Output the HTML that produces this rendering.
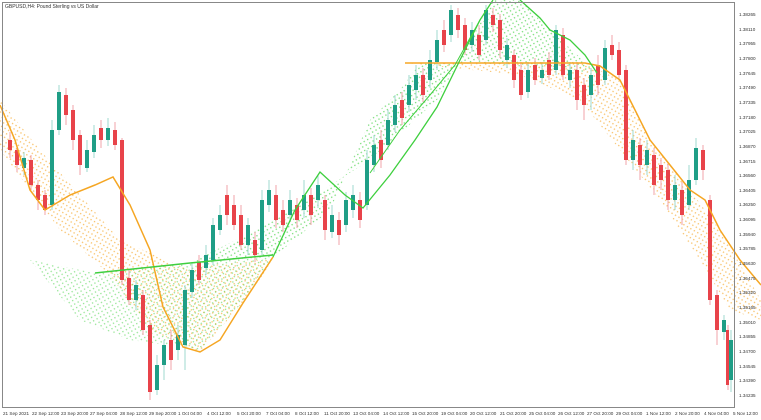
<!DOCTYPE html>
<html><head><meta charset="utf-8"><style>
html,body{margin:0;padding:0;background:#fff;width:761px;height:420px;overflow:hidden}
svg{display:block}
text{font-family:"Liberation Sans",sans-serif;fill:#333}
.g line{stroke:#9fd8cf;stroke-width:1}
.r line{stroke:#f2a3a8;stroke-width:1}
.g rect{fill:#1f9e86}
.r rect{fill:#e8434a}
</style></head><body>
<svg width="761" height="420" viewBox="0 0 761 420" xmlns="http://www.w3.org/2000/svg">
<defs>
<pattern id="po" width="4" height="4" patternUnits="userSpaceOnUse" patternTransform="rotate(30)"><rect x="0" y="0" width="1.3" height="1.3" fill="#f5a623" opacity="0.7"/></pattern>
<pattern id="pg" width="4" height="4" patternUnits="userSpaceOnUse" patternTransform="rotate(-30)"><rect x="0" y="0" width="1.3" height="1.3" fill="#3ecf3e" opacity="0.7"/></pattern>
</defs>
<rect x="0" y="0" width="761" height="420" fill="#fff"/>
<polygon points="0,100 40,150 120,240 185,268 275,258 245,300 200,352 150,330 110,275 60,230 0,150" fill="url(#po)"/>
<polygon points="30,260 95,273 190,263 275,256 240,305 200,350 183,347 130,340 80,320" fill="url(#pg)" opacity="0.8"/>
<polygon points="190,263 275,220 370,160 437,100 493,0 520,0 550,30 597,73 480,63 420,63 400,90 370,120 330,210 275,256" fill="url(#pg)"/>
<polygon points="405,63 480,63 585,63 620,80 650,140 690,190 720,230 761,300 761,320 730,310 700,260 660,200 620,150 580,100 520,75" fill="url(#po)"/>

<g class="g">
<line x1="24" x2="24" y1="152" y2="175"/><rect x="22" y="158" width="4" height="10"/>
<line x1="52" x2="52" y1="120" y2="210"/><rect x="50" y="130" width="4" height="75"/>
<line x1="59" x2="59" y1="85" y2="135"/><rect x="57" y="92" width="4" height="38"/>
<line x1="87" x2="87" y1="140" y2="172"/><rect x="85" y="150" width="4" height="18"/>
<line x1="94" x2="94" y1="125" y2="158"/><rect x="92" y="135" width="4" height="17"/>
<line x1="108" x2="108" y1="118" y2="146"/><rect x="106" y="128" width="4" height="12"/>
<line x1="136" x2="136" y1="280" y2="310"/><rect x="134" y="285" width="4" height="15"/>
<line x1="157" x2="157" y1="355" y2="395"/><rect x="155" y="365" width="4" height="25"/>
<line x1="164" x2="164" y1="340" y2="380"/><rect x="162" y="345" width="4" height="20"/>
<line x1="178" x2="178" y1="325" y2="360"/><rect x="176" y="335" width="4" height="15"/>
<line x1="185" x2="185" y1="285" y2="370"/><rect x="183" y="290" width="4" height="55"/>
<line x1="192" x2="192" y1="262" y2="298"/><rect x="190" y="270" width="4" height="22"/>
<line x1="206" x2="206" y1="245" y2="275"/><rect x="204" y="255" width="4" height="13"/>
<line x1="213" x2="213" y1="218" y2="265"/><rect x="211" y="225" width="4" height="35"/>
<line x1="220" x2="220" y1="205" y2="235"/><rect x="218" y="215" width="4" height="15"/>
<line x1="248" x2="248" y1="218" y2="255"/><rect x="246" y="225" width="4" height="20"/>
<line x1="262" x2="262" y1="190" y2="255"/><rect x="260" y="200" width="4" height="50"/>
<line x1="269" x2="269" y1="180" y2="212"/><rect x="267" y="190" width="4" height="15"/>
<line x1="290" x2="290" y1="190" y2="222"/><rect x="288" y="200" width="4" height="15"/>
<line x1="304" x2="304" y1="180" y2="218"/><rect x="302" y="195" width="4" height="15"/>
<line x1="318" x2="318" y1="175" y2="208"/><rect x="316" y="185" width="4" height="15"/>
<line x1="332" x2="332" y1="205" y2="238"/><rect x="330" y="215" width="4" height="17"/>
<line x1="346" x2="346" y1="192" y2="232"/><rect x="344" y="200" width="4" height="25"/>
<line x1="353" x2="353" y1="185" y2="218"/><rect x="351" y="195" width="4" height="15"/>
<line x1="367" x2="367" y1="150" y2="210"/><rect x="365" y="160" width="4" height="45"/>
<line x1="374" x2="374" y1="135" y2="172"/><rect x="372" y="145" width="4" height="20"/>
<line x1="388" x2="388" y1="110" y2="150"/><rect x="386" y="120" width="4" height="25"/>
<line x1="395" x2="395" y1="95" y2="132"/><rect x="393" y="105" width="4" height="20"/>
<line x1="409" x2="409" y1="75" y2="112"/><rect x="407" y="85" width="4" height="20"/>
<line x1="416" x2="416" y1="65" y2="100"/><rect x="414" y="75" width="4" height="15"/>
<line x1="430" x2="430" y1="50" y2="88"/><rect x="428" y="60" width="4" height="20"/>
<line x1="437" x2="437" y1="30" y2="70"/><rect x="435" y="40" width="4" height="22"/>
<line x1="451" x2="451" y1="5" y2="42"/><rect x="449" y="10" width="4" height="25"/>
<line x1="472" x2="472" y1="22" y2="52"/><rect x="470" y="30" width="4" height="15"/>
<line x1="486" x2="486" y1="5" y2="45"/><rect x="484" y="10" width="4" height="30"/>
<line x1="507" x2="507" y1="38" y2="68"/><rect x="505" y="45" width="4" height="15"/>
<line x1="528" x2="528" y1="62" y2="98"/><rect x="526" y="70" width="4" height="22"/>
<line x1="542" x2="542" y1="62" y2="84"/><rect x="540" y="70" width="4" height="8"/>
<line x1="556" x2="556" y1="25" y2="75"/><rect x="554" y="30" width="4" height="40"/>
<line x1="570" x2="570" y1="62" y2="88"/><rect x="568" y="70" width="4" height="10"/>
<line x1="591" x2="591" y1="68" y2="110"/><rect x="589" y="75" width="4" height="20"/>
<line x1="605" x2="605" y1="40" y2="85"/><rect x="603" y="48" width="4" height="32"/>
<line x1="633" x2="633" y1="130" y2="170"/><rect x="631" y="140" width="4" height="20"/>
<line x1="647" x2="647" y1="140" y2="175"/><rect x="645" y="150" width="4" height="15"/>
<line x1="675" x2="675" y1="175" y2="210"/><rect x="673" y="185" width="4" height="15"/>
<line x1="689" x2="689" y1="165" y2="210"/><rect x="687" y="180" width="4" height="25"/>
<line x1="696" x2="696" y1="138" y2="185"/><rect x="694" y="148" width="4" height="32"/>
<line x1="724" x2="724" y1="315" y2="340"/><rect x="722" y="320" width="4" height="12"/>
<line x1="731" x2="731" y1="330" y2="392"/><rect x="729" y="340" width="4" height="40"/>
</g>
<g class="r">
<line x1="10" x2="10" y1="132" y2="158"/><rect x="8" y="140" width="4" height="10"/>
<line x1="17" x2="17" y1="145" y2="172"/><rect x="15" y="150" width="4" height="15"/>
<line x1="31" x2="31" y1="155" y2="190"/><rect x="29" y="160" width="4" height="25"/>
<line x1="38" x2="38" y1="180" y2="210"/><rect x="36" y="185" width="4" height="15"/>
<line x1="45" x2="45" y1="190" y2="215"/><rect x="43" y="195" width="4" height="15"/>
<line x1="66" x2="66" y1="88" y2="125"/><rect x="64" y="95" width="4" height="20"/>
<line x1="73" x2="73" y1="105" y2="150"/><rect x="71" y="110" width="4" height="30"/>
<line x1="80" x2="80" y1="130" y2="175"/><rect x="78" y="135" width="4" height="30"/>
<line x1="101" x2="101" y1="120" y2="148"/><rect x="99" y="128" width="4" height="12"/>
<line x1="115" x2="115" y1="122" y2="150"/><rect x="113" y="130" width="4" height="15"/>
<line x1="122" x2="122" y1="138" y2="285"/><rect x="120" y="140" width="4" height="140"/>
<line x1="129" x2="129" y1="270" y2="305"/><rect x="127" y="278" width="4" height="22"/>
<line x1="143" x2="143" y1="290" y2="335"/><rect x="141" y="295" width="4" height="35"/>
<line x1="150" x2="150" y1="320" y2="400"/><rect x="148" y="325" width="4" height="67"/>
<line x1="171" x2="171" y1="330" y2="370"/><rect x="169" y="340" width="4" height="20"/>
<line x1="199" x2="199" y1="255" y2="285"/><rect x="197" y="262" width="4" height="18"/>
<line x1="227" x2="227" y1="185" y2="225"/><rect x="225" y="195" width="4" height="20"/>
<line x1="234" x2="234" y1="195" y2="230"/><rect x="232" y="205" width="4" height="20"/>
<line x1="241" x2="241" y1="205" y2="250"/><rect x="239" y="215" width="4" height="30"/>
<line x1="255" x2="255" y1="232" y2="262"/><rect x="253" y="240" width="4" height="15"/>
<line x1="276" x2="276" y1="185" y2="228"/><rect x="274" y="195" width="4" height="25"/>
<line x1="283" x2="283" y1="200" y2="232"/><rect x="281" y="210" width="4" height="15"/>
<line x1="297" x2="297" y1="198" y2="228"/><rect x="295" y="205" width="4" height="15"/>
<line x1="311" x2="311" y1="188" y2="225"/><rect x="309" y="195" width="4" height="20"/>
<line x1="325" x2="325" y1="195" y2="240"/><rect x="323" y="200" width="4" height="30"/>
<line x1="339" x2="339" y1="212" y2="245"/><rect x="337" y="220" width="4" height="15"/>
<line x1="360" x2="360" y1="192" y2="228"/><rect x="358" y="200" width="4" height="20"/>
<line x1="381" x2="381" y1="130" y2="168"/><rect x="379" y="140" width="4" height="20"/>
<line x1="402" x2="402" y1="92" y2="125"/><rect x="400" y="100" width="4" height="18"/>
<line x1="423" x2="423" y1="68" y2="102"/><rect x="421" y="75" width="4" height="20"/>
<line x1="444" x2="444" y1="20" y2="52"/><rect x="442" y="30" width="4" height="15"/>
<line x1="458" x2="458" y1="8" y2="38"/><rect x="456" y="15" width="4" height="15"/>
<line x1="465" x2="465" y1="18" y2="55"/><rect x="463" y="25" width="4" height="25"/>
<line x1="479" x2="479" y1="25" y2="60"/><rect x="477" y="35" width="4" height="20"/>
<line x1="493" x2="493" y1="8" y2="32"/><rect x="491" y="15" width="4" height="10"/>
<line x1="500" x2="500" y1="14" y2="58"/><rect x="498" y="20" width="4" height="30"/>
<line x1="514" x2="514" y1="50" y2="88"/><rect x="512" y="55" width="4" height="25"/>
<line x1="521" x2="521" y1="62" y2="100"/><rect x="519" y="70" width="4" height="25"/>
<line x1="535" x2="535" y1="58" y2="85"/><rect x="533" y="65" width="4" height="15"/>
<line x1="549" x2="549" y1="52" y2="80"/><rect x="547" y="60" width="4" height="15"/>
<line x1="563" x2="563" y1="28" y2="80"/><rect x="561" y="35" width="4" height="40"/>
<line x1="577" x2="577" y1="62" y2="110"/><rect x="575" y="70" width="4" height="30"/>
<line x1="584" x2="584" y1="78" y2="120"/><rect x="582" y="85" width="4" height="20"/>
<line x1="598" x2="598" y1="55" y2="95"/><rect x="596" y="65" width="4" height="20"/>
<line x1="612" x2="612" y1="35" y2="60"/><rect x="610" y="45" width="4" height="10"/>
<line x1="619" x2="619" y1="42" y2="80"/><rect x="617" y="50" width="4" height="25"/>
<line x1="626" x2="626" y1="65" y2="165"/><rect x="624" y="70" width="4" height="90"/>
<line x1="640" x2="640" y1="138" y2="180"/><rect x="638" y="145" width="4" height="20"/>
<line x1="654" x2="654" y1="148" y2="195"/><rect x="652" y="155" width="4" height="30"/>
<line x1="661" x2="661" y1="158" y2="190"/><rect x="659" y="165" width="4" height="15"/>
<line x1="668" x2="668" y1="162" y2="210"/><rect x="666" y="170" width="4" height="30"/>
<line x1="682" x2="682" y1="182" y2="225"/><rect x="680" y="190" width="4" height="25"/>
<line x1="703" x2="703" y1="145" y2="180"/><rect x="701" y="150" width="4" height="20"/>
<line x1="710" x2="710" y1="195" y2="305"/><rect x="708" y="200" width="4" height="100"/>
<line x1="717" x2="717" y1="290" y2="345"/><rect x="715" y="295" width="4" height="35"/>
<line x1="728" x2="728" y1="325" y2="390"/><rect x="726" y="330" width="3" height="55"/>
</g>

<polyline points="0,105 15,140 30,190 45,210 70,195 95,185 113,177 130,205 150,250 163,307 183,347 200,352 220,340 243,303 273,257" fill="none" stroke="#f5a623" stroke-width="1.5"/>
<polyline points="405,63 585,63 600,66 620,80 635,110 650,140 670,165 690,190 705,200 720,230 740,260 761,285" fill="none" stroke="#f5a623" stroke-width="1.5"/>
<polyline points="95,273 190,263 273,255" fill="none" stroke="#3ecf3e" stroke-width="1.5"/>
<polyline points="273,257 295,210 320,172 345,195 363,208 390,175 415,140 437,107 460,60 480,20 493,0" fill="none" stroke="#3ecf3e" stroke-width="1.3"/>
<polyline points="520,0 540,18 550,30 570,40 585,55 597,73" fill="none" stroke="#3ecf3e" stroke-width="1.3"/>
<polyline points="370,173 400,130 430,95 455,65 480,20" fill="none" stroke="#3ecf3e" stroke-width="1"/>
<rect x="2.5" y="2.5" width="732" height="405" fill="none" stroke="#888" stroke-width="1"/>
<text x="5" y="8" font-size="5">GBPUSD,H4:  Pound Sterling vs US Dollar</text>
<g font-size="4.6" stroke="none">
<text x="739" y="16">1.38265</text><text x="739" y="31">1.38110</text><text x="739" y="45">1.37955</text><text x="739" y="60">1.37800</text><text x="739" y="75">1.37645</text><text x="739" y="89">1.37490</text><text x="739" y="104">1.37335</text><text x="739" y="119">1.37180</text><text x="739" y="133">1.37025</text><text x="739" y="148">1.36870</text><text x="739" y="163">1.36715</text><text x="739" y="177">1.36560</text><text x="739" y="192">1.36405</text><text x="739" y="206">1.36250</text><text x="739" y="221">1.36095</text><text x="739" y="236">1.35940</text><text x="739" y="250">1.35785</text><text x="739" y="265">1.35630</text><text x="739" y="280">1.35475</text><text x="739" y="294">1.35320</text><text x="739" y="309">1.35165</text><text x="739" y="324">1.35010</text><text x="739" y="338">1.34855</text><text x="739" y="353">1.34700</text><text x="739" y="368">1.34545</text><text x="739" y="382">1.34390</text><text x="739" y="397">1.34235</text>
<text x="3" y="415">21 Sep 2021</text><text x="32" y="415">22 Sep 12:00</text><text x="61" y="415">23 Sep 20:00</text><text x="90" y="415">27 Sep 04:00</text><text x="120" y="415">28 Sep 12:00</text><text x="149" y="415">29 Sep 20:00</text><text x="178" y="415">1 Oct 04:00</text><text x="207" y="415">4 Oct 12:00</text><text x="237" y="415">5 Oct 20:00</text><text x="266" y="415">7 Oct 04:00</text><text x="295" y="415">8 Oct 12:00</text><text x="324" y="415">11 Oct 20:00</text><text x="353" y="415">13 Oct 04:00</text><text x="383" y="415">14 Oct 12:00</text><text x="412" y="415">15 Oct 20:00</text><text x="441" y="415">19 Oct 04:00</text><text x="470" y="415">20 Oct 12:00</text><text x="500" y="415">21 Oct 20:00</text><text x="529" y="415">25 Oct 04:00</text><text x="558" y="415">26 Oct 12:00</text><text x="587" y="415">27 Oct 20:00</text><text x="616" y="415">29 Oct 04:00</text><text x="646" y="415">1 Nov 12:00</text><text x="675" y="415">2 Nov 20:00</text><text x="704" y="415">4 Nov 04:00</text><text x="733" y="415">5 Nov 12:00</text>
</g>
</svg>
</body></html>
